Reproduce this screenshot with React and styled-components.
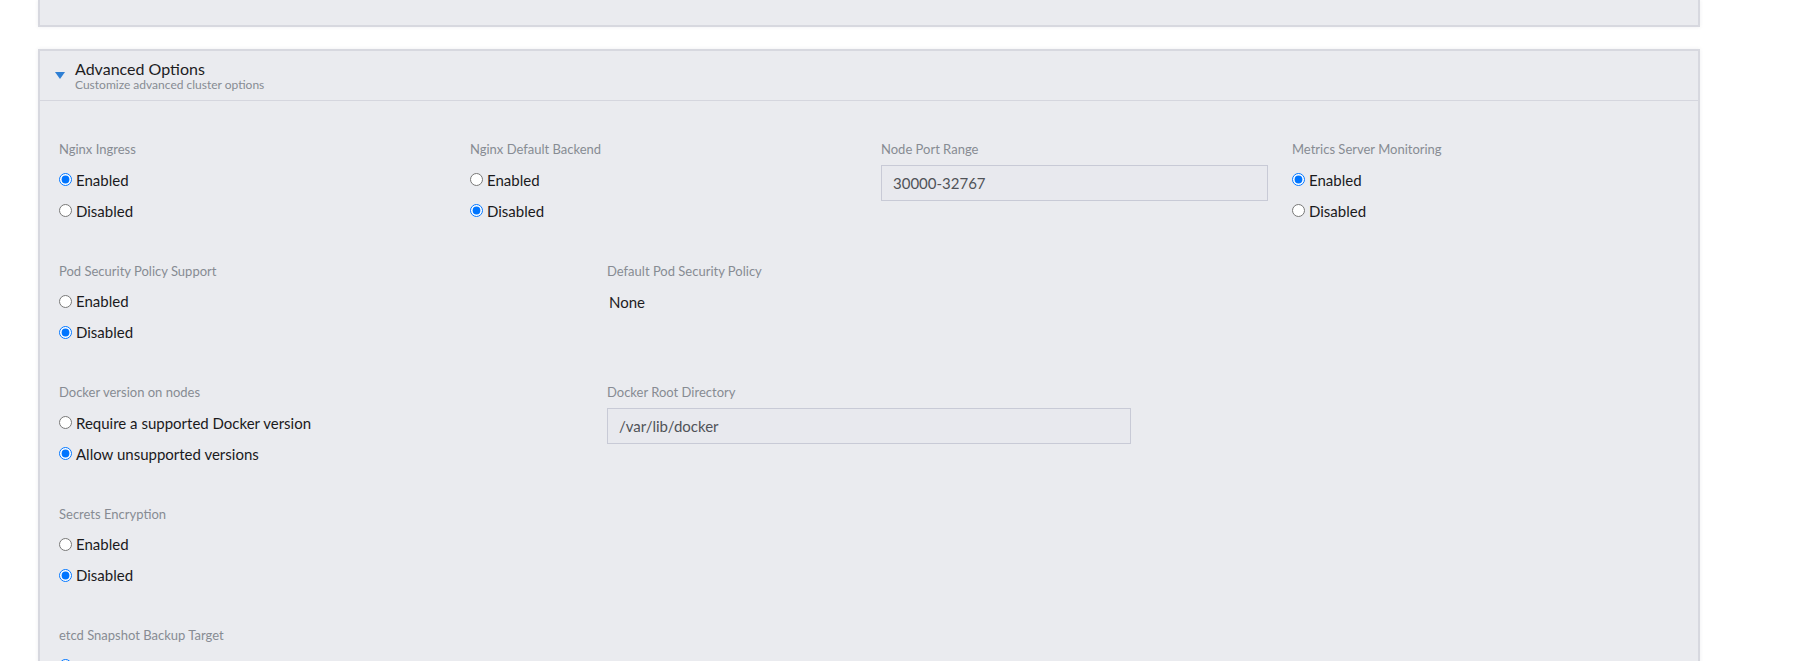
import React from 'react';
import styled, { createGlobalStyle } from 'styled-components';

const GlobalStyle = createGlobalStyle`
  html, body {
    margin: 0;
    padding: 0;
    background: #ffffff;
  }

  body {
    font-family: Lato, 'Open Sans', 'Liberation Sans', sans-serif;
    color: #1d1d1f;
  }
`;

const Page = styled.div`
  width: 1662px;
  padding-left: 38px;
  display: flex;
  flex-direction: column;
  gap: 22px;
`;

const Panel = styled.section`
  background: #eaebef;
  border: 2px solid #d7d8df;
  box-shadow: 0 0 4px rgba(40, 45, 70, 0.08);
`;

const StubPanel = styled(Panel)`
  height: 25px;
  border-top: none;
`;

const Header = styled.div`
  display: flex;
  align-items: flex-start;
  gap: 10px;
  padding: 9px 20px 8px 15px;
  border-bottom: 1px solid #d5d6de;
`;

const Caret = styled.span`
  width: 0;
  height: 0;
  margin-top: 12px;
  border-left: 5px solid transparent;
  border-right: 5px solid transparent;
  border-top: 7px solid #2f7fd4;
`;

const HeaderText = styled.div`
  display: flex;
  flex-direction: column;
`;

const Title = styled.h2`
  margin: 0;
  font-size: 16px;
  line-height: 18px;
  font-weight: 400;
  color: #1d1d1f;
`;

const Subtitle = styled.p`
  margin: 0;
  font-size: 12px;
  line-height: 14px;
  color: #878b93;
`;

const Body = styled.div`
  display: flex;
  flex-direction: column;
  gap: 36.5px;
  padding: 40px 19px 40px 19px;
`;

const Row = styled.div`
  display: grid;
  grid-template-columns: repeat(${(p) => p.$cols}, 1fr);
  column-gap: 24px;
`;

const Field = styled.div`
  display: flex;
  flex-direction: column;
`;

const Label = styled.label`
  font-size: 13px;
  line-height: 16px;
  margin-bottom: 8px;
  color: #878b93;
`;

const RadioGroup = styled.div`
  display: flex;
  flex-direction: column;
  margin-top: -1px;
`;

const Option = styled.label`
  display: flex;
  align-items: center;
  height: 31px;
  font-size: 15px;
  color: #1a1a1c;
`;

const Radio = styled.input`
  width: 13px;
  height: 13px;
  margin: 0 4px 0 0;
`;

const Value = styled.div`
  height: 31px;
  display: flex;
  align-items: center;
  padding-left: 2px;
  font-size: 15px;
  color: #1d1d1f;
`;

const TextInput = styled.input`
  box-sizing: border-box;
  height: 36px;
  width: 100%;
  padding: 0 11px;
  border: 1px solid #c8cad6;
  background: #e8e9ee;
  font-family: inherit;
  font-size: 15px;
  color: #505358;
  outline: none;
`;

const rows = [
  {
    cols: 4,
    fields: [
      { label: 'Nginx Ingress', options: ['Enabled', 'Disabled'], checked: 0 },
      { label: 'Nginx Default Backend', options: ['Enabled', 'Disabled'], checked: 1 },
      { label: 'Node Port Range', input: '30000-32767' },
      { label: 'Metrics Server Monitoring', options: ['Enabled', 'Disabled'], checked: 0 },
    ],
  },
  {
    cols: 3,
    fields: [
      { label: 'Pod Security Policy Support', options: ['Enabled', 'Disabled'], checked: 1 },
      { label: 'Default Pod Security Policy', value: 'None' },
    ],
  },
  {
    cols: 3,
    fields: [
      {
        label: 'Docker version on nodes',
        options: ['Require a supported Docker version', 'Allow unsupported versions'],
        checked: 1,
      },
      { label: 'Docker Root Directory', input: '/var/lib/docker' },
    ],
  },
  {
    cols: 3,
    fields: [
      { label: 'Secrets Encryption', options: ['Enabled', 'Disabled'], checked: 1 },
    ],
  },
  {
    cols: 3,
    fields: [
      { label: 'etcd Snapshot Backup Target', options: ['Local', 'S3'], checked: 0 },
    ],
  },
];

const FieldControl = ({ field, name }) => {
  if (field.input) {
    return <TextInput type="text" defaultValue={field.input} />;
  }
  if (field.value) {
    return <Value>{field.value}</Value>;
  }
  return (
    <RadioGroup role="radiogroup">
      {field.options.map((opt, i) => (
        <Option key={opt}>
          <Radio type="radio" name={name} defaultChecked={i === field.checked} />
          {opt}
        </Option>
      ))}
    </RadioGroup>
  );
};

const App = () => (
  <>
    <GlobalStyle />
    <Page>
      <StubPanel />
      <Panel>
        <Header>
          <Caret />
          <HeaderText>
            <Title>Advanced Options</Title>
            <Subtitle>Customize advanced cluster options</Subtitle>
          </HeaderText>
        </Header>
        <Body>
          {rows.map((row, r) => (
            <Row key={r} $cols={row.cols}>
              {row.fields.map((field, f) => (
                <Field key={field.label}>
                  <Label>{field.label}</Label>
                  <FieldControl field={field} name={`opt-${r}-${f}`} />
                </Field>
              ))}
            </Row>
          ))}
        </Body>
      </Panel>
    </Page>
  </>
);

export default App;
